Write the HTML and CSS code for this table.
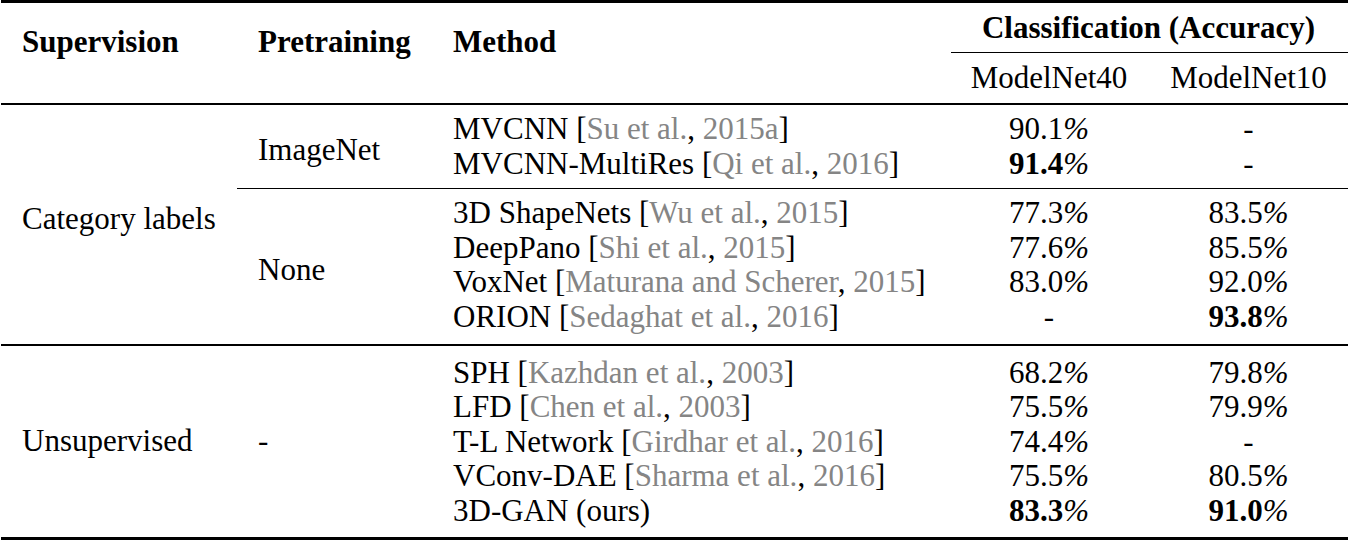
FILE: index.html
```html
<!DOCTYPE html>
<html lang="en">
<head>
<meta charset="utf-8">
<title>Classification results</title>
<link rel="stylesheet" href="styles.css">
</head>
<body>
<table class="results">
  <colgroup>
    <col class="c-sup">
    <col class="c-pre">
    <col class="c-meth">
    <col class="c-m40">
    <col class="c-m10">
  </colgroup>
  <thead>
    <tr class="h1">
      <th class="lft hsup" rowspan="2">Supervision</th>
      <th class="lft hsup" rowspan="2">Pretraining</th>
      <th class="lft hsup" rowspan="2">Method</th>
      <th class="cls" colspan="2">Classification (Accuracy)</th>
    </tr>
    <tr class="h2">
      <td class="num sub">ModelNet40</td>
      <td class="num sub">ModelNet10</td>
    </tr>
  </thead>
  <tbody class="grp-a">
    <tr class="first">
      <td class="lft cat" rowspan="6">Category labels</td>
      <td class="lft mid" rowspan="2">ImageNet</td>
      <td class="lft">MVCNN [<span class="cite">Su et al.</span>, <span class="cite">2015a</span>]</td>
      <td class="num">90.1<span class="pc">%</span></td>
      <td class="num">-</td>
    </tr>
    <tr class="last">
      <td class="lft">MVCNN-MultiRes [<span class="cite">Qi et al.</span>, <span class="cite">2016</span>]</td>
      <td class="num"><b>91.4</b><span class="pc">%</span></td>
      <td class="num">-</td>
    </tr>
    <tr class="first cmid">
      <td class="lft mid" rowspan="4">None</td>
      <td class="lft">3D ShapeNets [<span class="cite">Wu et al.</span>, <span class="cite">2015</span>]</td>
      <td class="num">77.3<span class="pc">%</span></td>
      <td class="num">83.5<span class="pc">%</span></td>
    </tr>
    <tr>
      <td class="lft">DeepPano [<span class="cite">Shi et al.</span>, <span class="cite">2015</span>]</td>
      <td class="num">77.6<span class="pc">%</span></td>
      <td class="num">85.5<span class="pc">%</span></td>
    </tr>
    <tr>
      <td class="lft">VoxNet [<span class="cite">Maturana and Scherer</span>, <span class="cite">2015</span>]</td>
      <td class="num">83.0<span class="pc">%</span></td>
      <td class="num">92.0<span class="pc">%</span></td>
    </tr>
    <tr class="last end">
      <td class="lft">ORION [<span class="cite">Sedaghat et al.</span>, <span class="cite">2016</span>]</td>
      <td class="num">-</td>
      <td class="num"><b>93.8</b><span class="pc">%</span></td>
    </tr>
  </tbody>
  <tbody class="grp-b">
    <tr class="first">
      <td class="lft mid" rowspan="5">Unsupervised</td>
      <td class="lft mid" rowspan="5">-</td>
      <td class="lft">SPH [<span class="cite">Kazhdan et al.</span>, <span class="cite">2003</span>]</td>
      <td class="num">68.2<span class="pc">%</span></td>
      <td class="num">79.8<span class="pc">%</span></td>
    </tr>
    <tr>
      <td class="lft">LFD [<span class="cite">Chen et al.</span>, <span class="cite">2003</span>]</td>
      <td class="num">75.5<span class="pc">%</span></td>
      <td class="num">79.9<span class="pc">%</span></td>
    </tr>
    <tr>
      <td class="lft">T-L Network [<span class="cite">Girdhar et al.</span>, <span class="cite">2016</span>]</td>
      <td class="num">74.4<span class="pc">%</span></td>
      <td class="num">-</td>
    </tr>
    <tr>
      <td class="lft">VConv-DAE [<span class="cite">Sharma et al.</span>, <span class="cite">2016</span>]</td>
      <td class="num">75.5<span class="pc">%</span></td>
      <td class="num">80.5<span class="pc">%</span></td>
    </tr>
    <tr class="last">
      <td class="lft">3D-GAN (ours)</td>
      <td class="num"><b>83.3</b><span class="pc">%</span></td>
      <td class="num"><b>91.0</b><span class="pc">%</span></td>
    </tr>
  </tbody>
</table>
</body>
</html>
```

FILE: styles.css
```css
html, body {
  margin: 0;
  padding: 0;
  background: #ffffff;
}

body {
  font-family: "Liberation Serif", "Times New Roman", serif;
  font-size: 31px;
  line-height: 34.6px;
  color: #000000;
}

.results {
  margin-left: 1px;
  border-collapse: separate;
  border-spacing: 0;
  table-layout: fixed;
  width: 1347px;
}

.c-sup { width: 236px; }
.c-pre { width: 195px; }
.c-meth { width: 517px; }
.c-m40 { width: 200px; }
.c-m10 { width: 199px; }

.results th,
.results td {
  padding: 0;
  white-space: nowrap;
  vertical-align: middle;
}

.results th {
  font-weight: bold;
}

.lft {
  text-align: left;
  padding-left: 21px !important;
}

.num {
  text-align: center;
}

/* header */
.h1 th {
  border-top: 3px solid #000;
  height: 50px;
}

.hsup {
  vertical-align: top !important;
  padding-top: 22px !important;
  border-bottom: 2px solid #000;
}

.cls {
  position: relative;
  text-align: center;
}

.cls::after {
  content: "";
  position: absolute;
  left: 2px;
  right: 0;
  bottom: 0;
  height: 1px;
  background: #000;
}

.h2 td {
  height: 50px;
  border-bottom: 2px solid #000;
}

/* body groups */
tr.first > td {
  padding-top: 7px;
}

tr.last > td {
  padding-bottom: 7px;
}

tr.end > td {
  padding-bottom: 9px;
}

.grp-b tr.first > td {
  padding-top: 10px;
}

.grp-b tr.last > td {
  padding-bottom: 8px;
}

td.mid,
.grp-b tr.first > td.mid {
  padding-top: 0;
  padding-bottom: 0;
}

td.cat {
  padding-top: 0;
  padding-bottom: 16px;
}

tr.cmid > td {
  border-top: 1px solid #000;
}

.grp-b tr.first > td {
  border-top: 2px solid #000;
}

.grp-b tr.last > td,
.grp-b td.mid {
  border-bottom: 3px solid #000;
}

.cite {
  color: #858585;
}

.pc {
  font-style: italic;
  font-weight: normal;
}

b {
  font-weight: bold;
}
```
